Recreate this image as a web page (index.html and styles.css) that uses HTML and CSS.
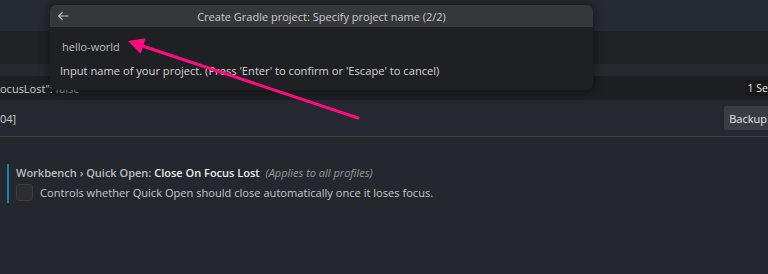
FILE: index.html
```html
<!DOCTYPE html>
<html>
<head>
<meta charset="utf-8">
<link rel="stylesheet" href="styles.css">
</head>
<body>
<div class="editor">
  <div class="tabs"></div>
  <div class="search"></div>
  <div class="gap"></div>
  <div class="row-json">
    <span class="json">ocusLost": <span class="val">false</span></span>
    <span class="count">1 Se</span>
  </div>
  <div class="row-sync">
    <span class="json">04]</span>
    <span class="backup">Backup</span>
  </div>
  <div class="list">
    <div class="setting">
      <div class="setting-title">
        <span class="cat">Workbench › Quick Open: </span><span class="name">Close On Focus Lost</span>
        <span class="scope">(Applies to all profiles)</span>
      </div>
      <div class="setting-desc">
        <span class="cb"></span>
        <span>Controls whether Quick Open should close automatically once it loses focus.</span>
      </div>
    </div>
  </div>
</div>

<div class="quickpick">
  <div class="qp-header">
    <svg class="back" width="14" height="14" viewBox="0 0 16 16"><path d="M14 8H3M7.5 3.5L3 8l4.5 4.5" fill="none" stroke="#c5c5c5" stroke-width="1.3"/></svg>
    <span class="qp-title">Create Gradle project: Specify project name (2/2)</span>
  </div>
  <div class="qp-input">hello-world</div>
  <div class="qp-msg">Input name of your project. (Press 'Enter' to confirm or 'Escape' to cancel)</div>
</div>

<svg class="arrow" width="768" height="274" viewBox="0 0 768 274">
  <line x1="358" y1="118" x2="141" y2="45.5" stroke="#fb0d80" stroke-width="3" stroke-linecap="round"/>
  <polygon points="128,41 145.7,38.2 140.7,53.7" fill="#fb0d80"/>
</svg>
</body>
</html>
```

FILE: styles.css
```css
* { box-sizing: border-box; }
html, body { margin: 0; padding: 0; }
body {
  width: 768px;
  height: 274px;
  overflow: hidden;
  background: #24272e;
  font-family: "Open Sans", "Noto Sans", sans-serif;
  font-size: 11px;
  color: #cccccc;
  position: relative;
}
.editor { display: flex; flex-direction: column; }
.tabs { height: 31px; background: #262a31; }
.search { height: 33px; background: #1f2125; }
.gap { height: 12px; background: #252930; }
.row-json {
  height: 24px;
  background: #1e1f22;
  display: flex;
  align-items: center;
  justify-content: space-between;
}
.json { color: #cccccc; white-space: nowrap; }
.val { color: #8f8f8f; }
.count {
  background: #19191c;
  color: #e6e6e6;
  padding: 1px 0 1px 2px;
  border-radius: 2px 0 0 2px;
  font-size: 10.5px;
  white-space: nowrap;
}
.row-sync {
  height: 37px;
  background: #252830;
  border-bottom: 1px solid #3b3e45;
  display: flex;
  align-items: center;
  justify-content: space-between;
}
.backup {
  background: #3a3d44;
  color: #e8e8e8;
  height: 24px;
  padding: 0 1px 0 5px;
  display: flex;
  align-items: center;
  border-radius: 2px 0 0 2px;
  white-space: nowrap;
  font-size: 11px;
}
.list { padding: 27px 0 0 7px; }
.setting {
  border-left: 2px solid #1583ad;
  padding: 1px 0 2px 7px;
  display: flex;
  flex-direction: column;
  gap: 4px;
}
.setting-title { font-weight: 600; white-space: nowrap; }
.cat { color: #bdbdbd; }
.name { color: #ececec; }
.scope { color: #9a9a9a; font-style: italic; font-weight: 400; margin-left: 3px; }
.setting-desc { display: flex; align-items: center; gap: 7px; color: #c8c8c8; font-size: 11.1px; }
.cb {
  width: 17px;
  height: 17px;
  background: #2b2d31;
  border: 1px solid #3a3c41;
  border-radius: 3px;
  flex: none;
}

.quickpick {
  position: absolute;
  left: 50px;
  top: 5px;
  width: 543px;
  height: 85px;
  background: #1f2023;
  border-radius: 6px;
  overflow: hidden;
  box-shadow: 0 0 8px 2px rgba(0,0,0,0.35);
}
.qp-header {
  height: 22px;
  background: #35373b;
  display: flex;
  align-items: center;
  justify-content: center;
  position: relative;
}
.back { position: absolute; left: 6px; top: 4px; }
.qp-title { color: #cccccc; }
.qp-input { padding: 12px 0 0 12px; height: 36px; color: #bdbdbd; }
.qp-msg { padding-left: 10px; color: #d4d4d4; font-size: 11.15px; }

.arrow { position: absolute; left: 0; top: 0; pointer-events: none; }
```
